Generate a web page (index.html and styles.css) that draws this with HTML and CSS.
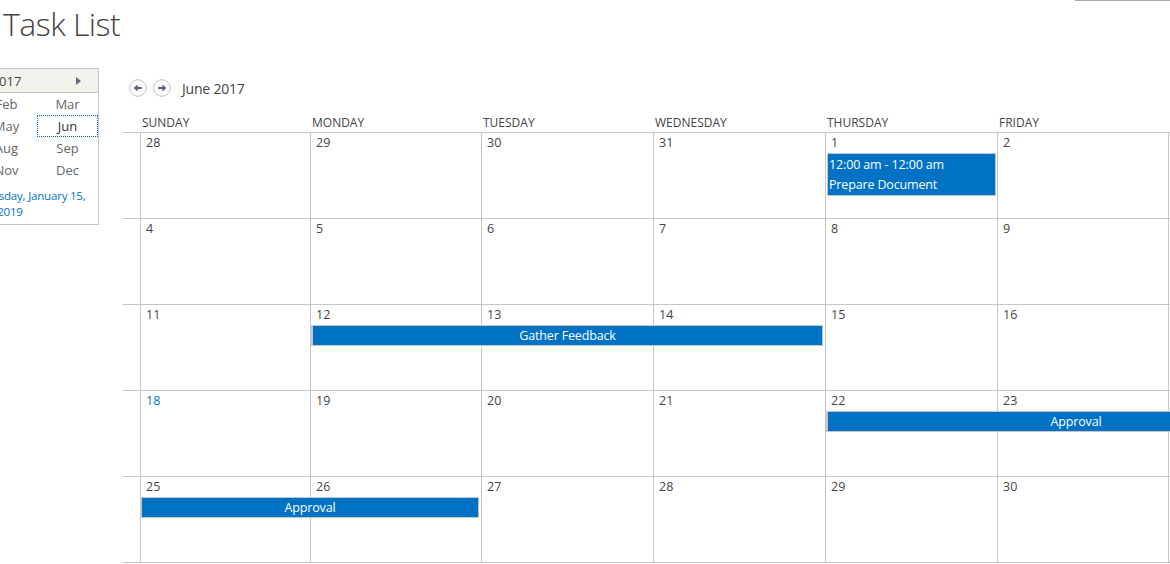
FILE: index.html
```html
<!DOCTYPE html>
<html>
<head>
<meta charset="utf-8">
<link rel="stylesheet" href="styles.css">
</head>
<body>
<div class="page">
  <header class="topbar">
    <h1 class="title">Task List</h1>
    <div class="top-rule"></div>
  </header>
  <div class="content">
    <aside class="mini">
      <div class="mini-head">
        <span class="mini-arrow left"></span>
        <span class="mini-year">2017</span>
        <span class="mini-arrow right"></span>
      </div>
      <div class="mini-months">
        <span>Jan</span><span>Feb</span><span>Mar</span>
        <span>Apr</span><span>May</span><span class="sel">Jun</span>
        <span>Jul</span><span>Aug</span><span>Sep</span>
        <span>Oct</span><span>Nov</span><span>Dec</span>
      </div>
      <div class="mini-foot">Today is Tuesday, January 15, 2019</div>
    </aside>
    <main class="cal">
      <div class="nav">
        <span class="navbtn"><svg width="18" height="18" viewBox="0 0 18 18"><circle cx="9" cy="9" r="8.3" fill="#fff" stroke="#c4c4c4" stroke-width="1"/><path d="M4.6 9 L8.6 5.6 L8.6 12.4 Z" fill="#5e5a80"/><rect x="8.2" y="8" width="4.6" height="2" fill="#5e5a80"/></svg></span>
        <span class="navbtn"><svg width="18" height="18" viewBox="0 0 18 18"><circle cx="9" cy="9" r="8.3" fill="#fff" stroke="#c4c4c4" stroke-width="1"/><path d="M13.4 9 L9.4 5.6 L9.4 12.4 Z" fill="#5e5a80"/><rect x="5.2" y="8" width="4.6" height="2" fill="#5e5a80"/></svg></span>
        <span class="month">June 2017</span>
      </div>
      <div class="dayheads">
        <span class="gut"></span>
        <span>SUNDAY</span><span>MONDAY</span><span>TUESDAY</span><span>WEDNESDAY</span><span>THURSDAY</span><span>FRIDAY</span><span>SATURDAY</span>
      </div>
      <div class="week">
        <div class="day c1">28</div><div class="day c2">29</div><div class="day c3">30</div><div class="day c4">31</div><div class="day c5">1</div><div class="day c6">2</div><div class="day c7">3</div>
        <div class="ev block c5">12:00 am - 12:00 am<br>Prepare Document</div>
      </div>
      <div class="week">
        <div class="day c1">4</div><div class="day c2">5</div><div class="day c3">6</div><div class="day c4">7</div><div class="day c5">8</div><div class="day c6">9</div><div class="day c7">10</div>
      </div>
      <div class="week">
        <div class="day c1">11</div><div class="day c2">12</div><div class="day c3">13</div><div class="day c4">14</div><div class="day c5">15</div><div class="day c6">16</div><div class="day c7">17</div>
        <div class="ev bar gather">Gather Feedback</div>
      </div>
      <div class="week">
        <div class="day c1 link">18</div><div class="day c2">19</div><div class="day c3">20</div><div class="day c4">21</div><div class="day c5">22</div><div class="day c6">23</div><div class="day c7">24</div>
        <div class="ev bar appr1">Approval</div>
      </div>
      <div class="week last">
        <div class="day c1">25</div><div class="day c2">26</div><div class="day c3">27</div><div class="day c4">28</div><div class="day c5">29</div><div class="day c6">30</div><div class="day c7">1</div>
        <div class="ev bar appr2">Approval</div>
      </div>
    </main>
  </div>
</div>
</body>
</html>
```

FILE: styles.css
```css
html, body {
  margin: 0;
  padding: 0;
  overflow: hidden;
  background: #fff;
}
body {
  font-family: "Open Sans", "Noto Sans", sans-serif;
  color: #444;
  width: 1170px;
  height: 564px;
}
.page {
  width: 1170px;
}
.topbar {
  display: flex;
  justify-content: space-between;
  align-items: flex-start;
  height: 60px;
}
.title {
  margin: 0;
  padding: 2px 0 0 3px;
  font-weight: 300;
  font-size: 32px;
  line-height: 44px;
  color: #444;
  letter-spacing: -0.5px;
}
.top-rule {
  width: 95px;
  border-top: 1px solid #a8a8a8;
}
.content {
  display: flex;
  align-items: flex-start;
}
.mini {
  box-sizing: border-box;
  width: 185px;
  margin-left: -86px;
  margin-top: 8px;
  border: 1px solid #c6c6c6;
  flex: none;
}
.mini-head {
  display: flex;
  justify-content: space-between;
  align-items: center;
  height: 23px;
  padding: 0 17px;
  background: #f3f1ec;
  border-bottom: 1px solid #c6c6c6;
  font-size: 13px;
  color: #444;
}
.mini-arrow {
  width: 0;
  height: 0;
  border-top: 4px solid transparent;
  border-bottom: 4px solid transparent;
}
.mini-arrow.right {
  border-left: 5px solid #6a6480;
}
.mini-arrow.left {
  border-right: 5px solid #6a6480;
}
.mini-months {
  display: grid;
  grid-template-columns: repeat(3, 61px);
  grid-auto-rows: 22px;
  font-size: 13px;
  color: #666;
}
.mini-months span {
  box-sizing: border-box;
  text-align: center;
  line-height: 20px;
  border: 1px solid transparent;
}
.mini-months .sel {
  border: 1px dotted #0072c6;
  color: #333;
}
.mini-foot {
  padding: 7px 6px 4px 13px;
  text-align: center;
  font-size: 11.5px;
  letter-spacing: -0.2px;
  line-height: 16px;
  color: #0072c6;
}
.cal {
  margin-left: 24px;
  flex: none;
}
.nav {
  display: flex;
  align-items: center;
  height: 20px;
  margin-top: 18px;
  padding-left: 6px;
}
.navbtn {
  display: flex;
  width: 18px;
  height: 18px;
  margin-right: 6px;
}
.month {
  margin-left: 5px;
  font-size: 14px;
  color: #444;
  letter-spacing: -0.2px;
}
.dayheads {
  display: grid;
  grid-template-columns: 17px 170px 171px 172px 172px 172px 171px 171px;
  padding-top: 17px;
  height: 17px;
  font-size: 12px;
  line-height: 16px;
  color: #444;
}
.dayheads span {
  padding-left: 2px;
}
.week {
  box-sizing: border-box;
  display: grid;
  grid-template-columns: 17px 170px 171px 172px 172px 172px 171px 171px;
  grid-template-rows: 20px auto 1fr;
  height: 86px;
  border-top: 1px solid #c6c6c6;
}
.week.last {
  height: 87px;
  border-bottom: 1px solid #c6c6c6;
}
.day {
  grid-row: 1 / 4;
  border-left: 1px solid #c6c6c6;
  padding: 2px 0 0 5px;
  font-size: 12.5px;
  line-height: 16px;
  color: #444;
}
.day.link { color: #0072c6; }
.c1 { grid-column: 2; }
.c2 { grid-column: 3; }
.c3 { grid-column: 4; }
.c4 { grid-column: 5; }
.c5 { grid-column: 6; }
.c6 { grid-column: 7; }
.c7 { grid-column: 8; }
.ev {
  grid-row: 2;
  background: #0072c6;
  color: #fff;
  font-size: 12.5px;
  letter-spacing: -0.15px;
  border: 1px solid #c6c6c6;
  white-space: nowrap;
}
.block {
  margin: 0 1px 0 2px;
  padding: 1px 2px 0 1px;
  line-height: 20px;
}
.bar {
  padding-top: 1px;
  line-height: 18px;
  text-align: center;
  border-left-width: 2px;
}
.gather {
  grid-column: 3 / 6;
  margin: 0 2px 0 1px;
}
.appr1 {
  grid-column: 6 / 9;
  margin: 0 14px 0 1px;
}
.appr2 {
  grid-column: 2 / 4;
  margin: 0 2px 0 0;
}
```
